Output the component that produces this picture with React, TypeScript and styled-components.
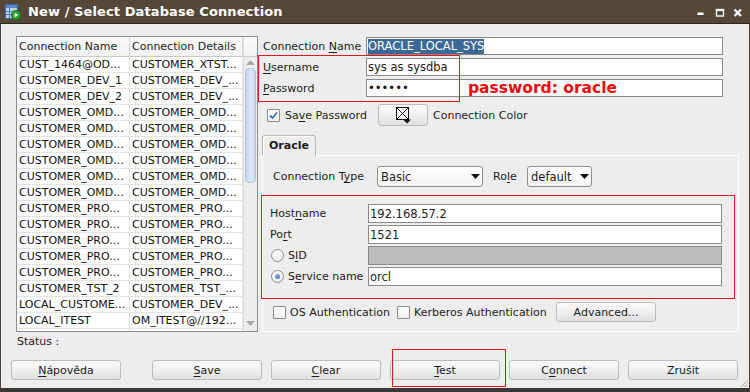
import React from "react";
import styled, { createGlobalStyle } from "styled-components";

const GlobalStyle = createGlobalStyle`
  html, body {
    margin: 0;
    padding: 0;
    background: #ededed;
  }
  body {
    font-family: "DejaVu Sans", "Liberation Sans", sans-serif;
    font-size: 11px;
    color: #1c1c1c;
  }
`;

const Window = styled.div`
  position: relative;
  width: 750px;
  height: 392px;
  box-sizing: border-box;
  display: flex;
  flex-direction: column;
  background: #ededed;
  border-bottom: 4px solid #3a3734;
  box-shadow: inset 1px 0 0 #4b4138, inset -1px 0 0 #4b4138;
  overflow: hidden;
`;

const TitleBar = styled.div`
  height: 23px;
  flex: none;
  display: flex;
  align-items: center;
  padding-left: 5px;
  background: #564839;
  border-bottom: 1px solid #2f2822;
  color: #fff;
  font-weight: bold;
  font-size: 13px;
`;

const TitleText = styled.span`
  margin-left: 7px;
  letter-spacing: 0.1px;
`;

const Controls = styled.svg`
  margin-left: auto;
  margin-right: 7px;
`;

const Body = styled.div`
  display: flex;
  flex-direction: column;
  padding-top: 12px;
`;

const Main = styled.div`
  display: flex;
  height: 296px;
`;

const Table = styled.div`
  width: 242px;
  height: 296px;
  box-sizing: border-box;
  margin-left: 16px;
  border: 1px solid #8d8d8d;
  background: #fff;
  display: flex;
  overflow: hidden;
`;

const Grid = styled.div`
  width: 226px;
  display: flex;
  flex-direction: column;
`;

const HeaderRow = styled.div`
  display: flex;
  height: 20px;
  flex: none;
  box-sizing: border-box;
  border-bottom: 1px solid #c9c9c9;
  background: linear-gradient(#fbfbfb, #f1f1f1);
`;

const HeaderCell = styled.div`
  width: 113px;
  box-sizing: border-box;
  border-right: 1px solid #d2d2d2;
  padding-left: 2px;
  line-height: 19px;
  white-space: nowrap;
`;

const Row = styled.div`
  display: flex;
  height: 16px;
  flex: none;
  box-sizing: border-box;
  border-bottom: 1px solid #e4e4e4;
`;

const Cell = styled.div`
  width: 113px;
  box-sizing: border-box;
  border-right: 1px solid #e4e4e4;
  padding-left: 2px;
  line-height: 15px;
  white-space: nowrap;
  overflow: hidden;
  color: #111;
`;

const Scroll = styled.div`
  width: 15px;
  display: flex;
  flex-direction: column;
  align-items: center;
  background: #eeeeee;
  border-left: 1px solid #dedede;
  box-sizing: border-box;
`;

const ScrollHead = styled.div`
  height: 20px;
  width: 100%;
  flex: none;
  background: linear-gradient(#fbfbfb, #f1f1f1);
  border-bottom: 1px solid #c9c9c9;
  box-sizing: border-box;
`;

const Arrow = styled.svg`
  flex: none;
  margin-top: 3px;
`;

const Thumb = styled.div`
  width: 11px;
  height: 115px;
  margin-top: 3px;
  box-sizing: border-box;
  border: 1px solid #b3c4da;
  border-radius: 4px;
  background: linear-gradient(to right, #c6d6ea, #dbe6f3 60%, #c8d7ea);
`;

const ScrollFill = styled.div`
  flex: 1;
`;

const RightPane = styled.div`
  position: relative;
  margin-left: 4px;
  width: 488px;
  padding-top: 1px;
  display: flex;
  flex-direction: column;
`;

const FormRow = styled.div`
  display: flex;
  align-items: center;
  height: 18px;
  margin-bottom: 3px;
`;

const FieldLabel = styled.div`
  width: 104px;
  padding-left: 1px;
  box-sizing: border-box;
`;

const TextField = styled.div<{ $w: number; $h: number; $bg?: string }>`
  width: ${p => p.$w}px;
  height: ${p => p.$h}px;
  box-sizing: border-box;
  border: 1px solid #8a8a8a;
  background: ${p => p.$bg || "#fff"};
  padding-left: 1px;
  display: flex;
  align-items: center;
  white-space: nowrap;
  font-size: 11.5px;
`;

const Selected = styled.span`
  background: #3d6999;
  color: #fff;
  line-height: 15px;
`;

const Mark = styled.span`
  text-decoration: underline;
  text-underline-offset: 2px;
`;

const AnnotBox = styled.div`
  position: absolute;
  left: -4px;
  top: 19px;
  width: 202px;
  height: 47px;
  box-sizing: border-box;
  border: 1px solid #e3141b;
  pointer-events: none;
`;

const AnnotText = styled.div`
  position: absolute;
  left: 206px;
  top: 43px;
  line-height: 18px;
  color: #f2070d;
  font-weight: bold;
  font-size: 15.5px;
`;

const SaveRow = styled.div`
  display: flex;
  align-items: center;
  height: 22px;
  margin-top: 4px;
`;

const CheckBox = styled.div<{ $ml?: number }>`
  width: 13px;
  height: 13px;
  flex: none;
  margin-left: ${p => p.$ml || 0}px;
  box-sizing: border-box;
  border: 1px solid #8b8b8b;
  border-radius: 1px;
  background: linear-gradient(#ffffff, #eeeeee);
  display: flex;
  align-items: center;
  justify-content: center;
`;

const CheckText = styled.span<{ $w?: number; $ml?: number }>`
  margin-left: ${p => p.$ml ?? 5}px;
  ${p => (p.$w ? `width: ${p.$w}px;` : "")}
  white-space: nowrap;
  flex: none;
`;

const Button = styled.div<{ $w: number; $h: number; $ml?: number }>`
  width: ${p => p.$w}px;
  height: ${p => p.$h}px;
  margin-left: ${p => p.$ml || 0}px;
  flex: none;
  box-sizing: border-box;
  border: 1px solid #bcbcbc;
  border-radius: 3px;
  background: linear-gradient(#fafafa, #eeeeee 55%, #dedede);
  display: flex;
  align-items: center;
  justify-content: center;
  color: #1a1a1a;
`;

const TabStrip = styled.div`
  display: flex;
  margin-top: 9px;
`;

const Tab = styled.div`
  width: 54px;
  height: 21px;
  box-sizing: border-box;
  border: 1px solid #b9b9b9;
  border-bottom: none;
  border-radius: 3px 3px 0 0;
  box-shadow: inset 1px 1px 0 #fff;
  padding-left: 6px;
  line-height: 20px;
  font-weight: bold;
  background: #ededed;
  margin-bottom: -1px;
  position: relative;
  z-index: 1;
`;

const Panel = styled.div`
  width: 477px;
  height: 177px;
  box-sizing: border-box;
  border: 1px solid #fdfdfd;
  padding: 10px 0 0 10px;
  display: flex;
  flex-direction: column;
`;

const TypeRow = styled.div`
  display: flex;
  align-items: center;
  height: 21px;
`;

const TypeLabel = styled.div<{ $w: number; $ml?: number }>`
  width: ${p => p.$w}px;
  margin-left: ${p => p.$ml || 0}px;
  flex: none;
`;

const Select = styled.div<{ $w: number }>`
  width: ${p => p.$w}px;
  height: 21px;
  flex: none;
  box-sizing: border-box;
  border: 1px solid #8c8c8c;
  border-radius: 3px;
  background: linear-gradient(#ffffff, #f3f3f3);
  padding: 0 2px 0 3px;
  display: flex;
  align-items: center;
  justify-content: space-between;
  font-size: 11.5px;
`;

const HostGroup = styled.div`
  margin-top: 8px;
  margin-left: -12px;
  width: 474px;
  box-sizing: border-box;
  border: 1px solid #e3141b;
  padding: 8px 0 12px 8px;
  display: flex;
  flex-direction: column;
  gap: 2px;
`;

const HostRow = styled.div`
  display: flex;
  align-items: center;
  height: 19px;
`;

const HostLabel = styled.div`
  width: 98px;
  flex: none;
  display: flex;
  align-items: center;
  white-space: nowrap;
`;

const Radio = styled.div<{ $on?: boolean }>`
  width: 13px;
  height: 13px;
  margin-left: 1px;
  margin-right: 4px;
  flex: none;
  box-sizing: border-box;
  border: 1px solid #8d8d8d;
  border-radius: 50%;
  background: linear-gradient(#ffffff, #ececec);
  display: flex;
  align-items: center;
  justify-content: center;
  &::after {
    content: "";
    display: ${p => (p.$on ? "block" : "none")};
    width: 5px;
    height: 5px;
    border-radius: 50%;
    background: radial-gradient(circle at 35% 35%, #8fb0e4, #3a66b8);
  }
`;

const AuthRow = styled.div`
  display: flex;
  align-items: center;
  height: 20px;
  margin-top: 3px;
`;

const StatusRow = styled.div`
  height: 14px;
  line-height: 14px;
  margin-top: 3px;
  padding-left: 17px;
`;

const ButtonBar = styled.div`
  display: flex;
  margin-top: 11px;
`;

const TestMark = styled.div`
  position: absolute;
  left: 392px;
  top: 349px;
  width: 114px;
  height: 38px;
  box-sizing: border-box;
  border: 1px solid #e3141b;
  pointer-events: none;
`;

const Grip = styled.svg`
  position: absolute;
  right: 2px;
  bottom: 1px;
`;

const names = [
  "CUST_1464@OD...",
  "CUSTOMER_DEV_1",
  "CUSTOMER_DEV_2",
  "CUSTOMER_OMD...",
  "CUSTOMER_OMD...",
  "CUSTOMER_OMD...",
  "CUSTOMER_OMD...",
  "CUSTOMER_OMD...",
  "CUSTOMER_OMD...",
  "CUSTOMER_PRO...",
  "CUSTOMER_PRO...",
  "CUSTOMER_PRO...",
  "CUSTOMER_PRO...",
  "CUSTOMER_PRO...",
  "CUSTOMER_TST_2",
  "LOCAL_CUSTOME...",
  "LOCAL_ITEST",
  "",
];
const details = [
  "CUSTOMER_XTST...",
  "CUSTOMER_DEV_...",
  "CUSTOMER_DEV_...",
  "CUSTOMER_OMD...",
  "CUSTOMER_OMD...",
  "CUSTOMER_OMD...",
  "CUSTOMER_OMD...",
  "CUSTOMER_OMD...",
  "CUSTOMER_OMD...",
  "CUSTOMER_PRO...",
  "CUSTOMER_PRO...",
  "CUSTOMER_PRO...",
  "CUSTOMER_PRO...",
  "CUSTOMER_PRO...",
  "CUSTOMER_TST_...",
  "CUSTOMER_DEV_...",
  "OM_ITEST@//192...",
  "",
];

const Check = () => (
  <svg width="11" height="11" viewBox="0 0 11 11">
    <path d="M2 5.5 L4.5 8 L9 2.5" fill="none" stroke="#3e6fc4" strokeWidth="1.8" />
  </svg>
);

const Caret = () => (
  <svg width="9" height="5" viewBox="0 0 9 5">
    <path d="M0 0 H9 L4.5 5 Z" fill="#111" />
  </svg>
);

const AppIcon = () => (
  <svg width="16" height="17" viewBox="0 0 16 17">
    <rect x="0.5" y="1.5" width="12" height="14" fill="#b9cfeb" stroke="#3d69a9" />
    <rect x="1" y="2" width="11" height="3" fill="#5b88c9" />
    <path d="M1 8.5 H12 M1 11.5 H12 M4.5 5 V15" stroke="#5b7fb5" strokeWidth="1" />
    <circle cx="11" cy="12" r="4.5" fill="#2ea82e" stroke="#1b771b" />
    <path d="M9.6 9.8 L13.2 12 L9.6 14.2 Z" fill="#fff" />
  </svg>
);

const ColorIcon = () => (
  <svg width="17" height="18" viewBox="0 0 17 18">
    <rect x="1.5" y="1.5" width="12" height="12" fill="#fff" stroke="#111" />
    <path d="M1.5 1.5 L13.5 13.5 M13.5 1.5 L1.5 13.5" stroke="#111" strokeWidth="1" />
    <path d="M8 13.5 H16 L12 17.5 Z" fill="#111" />
  </svg>
);

export default function App() {
  return (
    <>
      <GlobalStyle />
      <Window>
        <TitleBar>
          <AppIcon />
          <TitleText>New / Select Database Connection</TitleText>
          <Controls width="46" height="23" viewBox="0 0 46 23">
            <rect x="0.5" y="12.5" width="6" height="2.5" fill="#fff" />
            <rect x="19.5" y="9.5" width="7" height="6.5" fill="none" stroke="#fff" strokeWidth="1.4" />
            <rect x="19" y="9" width="8" height="2" fill="#fff" />
            <path d="M37.5 9.5 L44 16 M44 9.5 L37.5 16" stroke="#fff" strokeWidth="2.2" />
          </Controls>
        </TitleBar>
        <Body>
          <Main>
            <Table>
              <Grid>
                <HeaderRow>
                  <HeaderCell>Connection Name</HeaderCell>
                  <HeaderCell>Connection Details</HeaderCell>
                </HeaderRow>
                {names.map((n, i) => (
                  <Row key={i}>
                    <Cell>{n}</Cell>
                    <Cell>{details[i]}</Cell>
                  </Row>
                ))}
              </Grid>
              <Scroll>
                <ScrollHead />
                <Arrow width="9" height="5" viewBox="0 0 9 5">
                  <path d="M0 5 L4.5 0 L9 5 Z" fill="#a9a9a9" />
                </Arrow>
                <Thumb />
                <ScrollFill />
                <Arrow width="9" height="5" viewBox="0 0 9 5" style={{ marginBottom: 5 }}>
                  <path d="M0 0 L9 0 L4.5 5 Z" fill="#a9a9a9" />
                </Arrow>
              </Scroll>
            </Table>
            <RightPane>
              <FormRow>
                <FieldLabel>
                  Connection <Mark>N</Mark>ame
                </FieldLabel>
                <TextField $w={357} $h={18}>
                  <Selected>ORACLE_LOCAL_SYS</Selected>
                </TextField>
              </FormRow>
              <FormRow>
                <FieldLabel>
                  <Mark>U</Mark>sername
                </FieldLabel>
                <TextField $w={357} $h={18}>sys as sysdba</TextField>
              </FormRow>
              <FormRow>
                <FieldLabel>
                  <Mark>P</Mark>assword
                </FieldLabel>
                <TextField $w={357} $h={18}>••••••</TextField>
              </FormRow>
              <AnnotBox />
              <AnnotText>password: oracle</AnnotText>
              <SaveRow>
                <CheckBox $ml={5}>
                  <Check />
                </CheckBox>
                <CheckText $w={93}>
                  Sa<Mark>v</Mark>e Password
                </CheckText>
                <Button $w={50} $h={22}>
                  <ColorIcon />
                </Button>
                <CheckText>Connection Color</CheckText>
              </SaveRow>
              <TabStrip>
                <Tab>Oracle</Tab>
              </TabStrip>
              <Panel>
                <TypeRow>
                  <TypeLabel $w={104}>
                    Connection T<Mark>y</Mark>pe
                  </TypeLabel>
                  <Select $w={106}>
                    Basic
                    <Caret />
                  </Select>
                  <TypeLabel $w={34} $ml={10}>
                    Ro<Mark>l</Mark>e
                  </TypeLabel>
                  <Select $w={65}>
                    default
                    <Caret />
                  </Select>
                </TypeRow>
                <HostGroup>
                  <HostRow>
                    <HostLabel>
                      Host<Mark>n</Mark>ame
                    </HostLabel>
                    <TextField $w={354} $h={19}>192.168.57.2</TextField>
                  </HostRow>
                  <HostRow>
                    <HostLabel>
                      Po<Mark>r</Mark>t
                    </HostLabel>
                    <TextField $w={354} $h={19}>1521</TextField>
                  </HostRow>
                  <HostRow>
                    <HostLabel>
                      <Radio />S<Mark>I</Mark>D
                    </HostLabel>
                    <TextField $w={354} $h={19} $bg="#bdbdbd" />
                  </HostRow>
                  <HostRow>
                    <HostLabel>
                      <Radio $on />S<Mark>e</Mark>rvice name
                    </HostLabel>
                    <TextField $w={354} $h={19}>orcl</TextField>
                  </HostRow>
                </HostGroup>
                <AuthRow>
                  <CheckBox />
                  <CheckText $w={107} $ml={4}>
                    OS Authentication
                  </CheckText>
                  <CheckBox />
                  <CheckText $w={142} $ml={4}>
                    Kerberos Authentication
                  </CheckText>
                  <Button $w={100} $h={20}>
                    Advanced...
                  </Button>
                </AuthRow>
              </Panel>
            </RightPane>
          </Main>
          <StatusRow>Status :</StatusRow>
          <ButtonBar>
            <Button $w={110} $h={20} $ml={11}>
              <span>
                <Mark>N</Mark>ápověda
              </span>
            </Button>
            <Button $w={110} $h={20} $ml={31}>
              <span>
                <Mark>S</Mark>ave
              </span>
            </Button>
            <Button $w={110} $h={20} $ml={9}>
              <span>
                <Mark>C</Mark>lear
              </span>
            </Button>
            <Button $w={110} $h={20} $ml={9}>
              <span>
                <Mark>T</Mark>est
              </span>
            </Button>
            <Button $w={110} $h={20} $ml={9}>
              <span>
                C<Mark>o</Mark>nnect
              </span>
            </Button>
            <Button $w={110} $h={20} $ml={9}>
              Zrušit
            </Button>
          </ButtonBar>
        </Body>
        <TestMark />
        <Grip width="8" height="8" viewBox="0 0 8 8">
          <path d="M8 1 L1 8 M8 4 L4 8 M8 7 L7 8" stroke="#b0b0b0" strokeWidth="1" />
        </Grip>
      </Window>
    </>
  );
}
